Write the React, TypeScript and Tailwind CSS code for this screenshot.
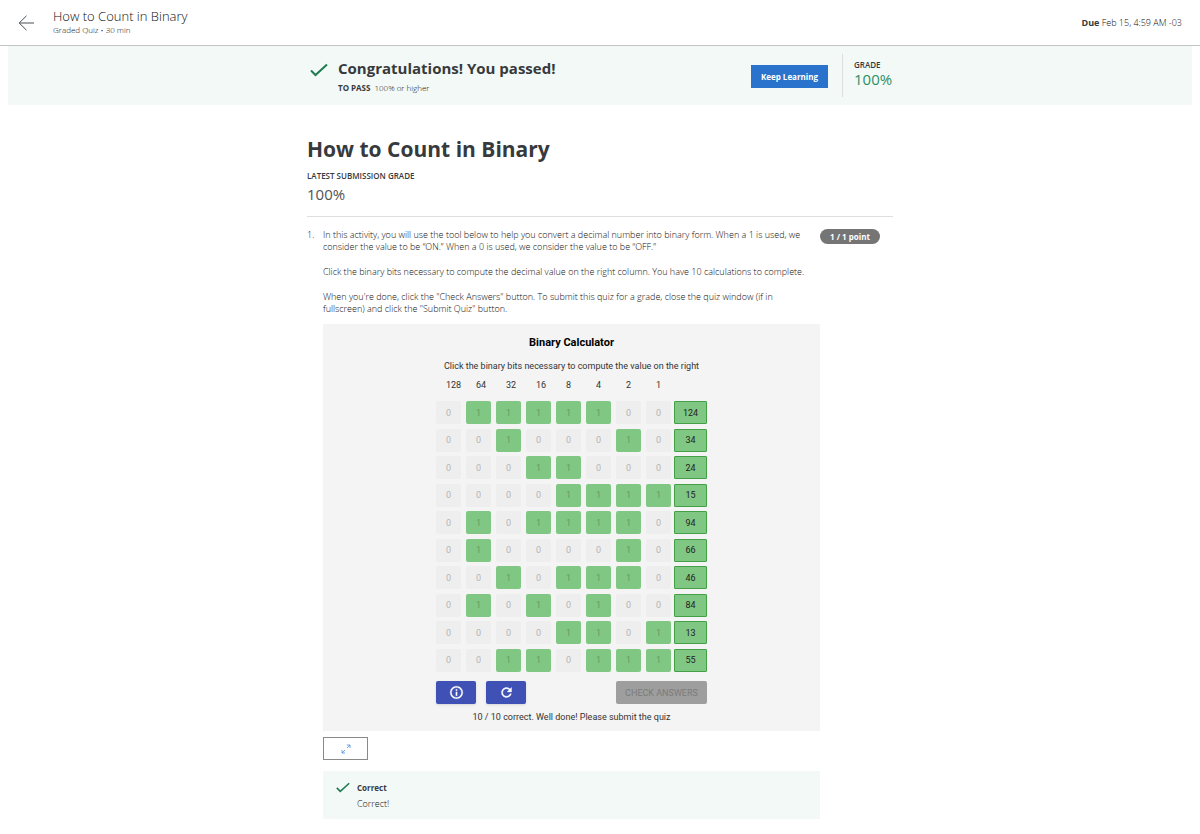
const columns = [128, 64, 32, 16, 8, 4, 2, 1];

const rows = [124, 34, 24, 15, 94, 66, 46, 84, 13, 55];

const CheckIcon = ({ className }: { className: string }) => (
  <svg className={className} viewBox="0 0 18 14" fill="none" stroke="#1d7c50" strokeWidth="2">
    <path d="M1 7.5L5.5 12L17 1.5" />
  </svg>
);

const Header = () => (
  <header className="flex h-[46px] items-center justify-between border-b border-[#c4c4c4] pl-[18px] pr-[18px]">
    <div className="flex items-center">
      <button type="button" aria-label="Back" className="mr-[19px]">
        <svg className="h-4 w-4" viewBox="0 0 16 16" fill="none" stroke="#4a4e52" strokeWidth="1">
          <path d="M8.5 0.8L1.2 8L8.5 15.2M1.2 8H16" />
        </svg>
      </button>
      <div className="pb-[2px]">
        <div className="text-[13px] font-light leading-4 text-[#111]">How to Count in Binary</div>
        <div className="text-[8px] font-light leading-3 text-[#111]">Graded Quiz • 30 min</div>
      </div>
    </div>
    <div className="text-[9px] font-light leading-3 text-[#111]">
      <span className="font-bold text-[#373a3c]">Due</span> Feb 15, 4:59 AM -03
    </div>
  </header>
);

const Banner = () => (
  <section className="mx-2 bg-[#f3f9f7]">
    <div className="mx-auto flex h-[59px] max-w-[586px] items-center">
      <CheckIcon className="mb-3 ml-[3px] mr-[10px] h-[14px] w-[18px]" />
      <div className="flex-1">
        <h2 className="text-[15px] font-bold leading-5 text-[#373a3c]">Congratulations! You passed!</h2>
        <p className="mt-1 text-[8px] font-light leading-3 text-[#111]">
          <span className="mr-1 font-bold text-[#373a3c]">TO PASS</span>100% or higher
        </p>
      </div>
      <button type="button" className="mr-[14px] mt-[2px] h-[23px] w-[77px] bg-[#2a73cc] text-[8px] font-bold text-white">
        Keep Learning
      </button>
      <div className="flex h-[43px] w-[51px] flex-col justify-center border-l border-[#dedede] pb-[6px] pl-[11px]">
        <div className="text-[8px] font-semibold leading-3 text-[#373a3c]">GRADE</div>
        <div className="text-[15px] leading-4 text-[#2f8f63]">100%</div>
      </div>
    </div>
  </section>
);

const Calculator = () => (
  <div className="mt-[9px] bg-[#f4f4f4] pb-2 pt-[13px] font-[Roboto,sans-serif] font-normal text-[#333]">
    <h3 className="text-center text-[11px] font-bold leading-3 text-black">Binary Calculator</h3>
    <p className="mt-[11px] text-center text-[9px] leading-3">
      Click the binary bits necessary to compute the value on the right
    </p>
    <div className="mx-auto w-[271px]">
      <div className="mt-[7px] flex gap-[5px] text-[9px] leading-3">
        {columns.map((value) => (
          <div key={value} className="w-[25px] pl-[10px]">{value}</div>
        ))}
      </div>
      <div className="mt-[10px] flex h-[271px] flex-col justify-between">
        {rows.map((total) => (
          <div key={total} className="flex h-[23px] items-center justify-between">
            <div className="flex gap-[5px]">
              {columns.map((value) => {
                const on = (total & value) !== 0;
                return (
                  <button
                    key={value}
                    type="button"
                    disabled
                    className={`h-[23px] w-[25px] rounded-[2px] text-[9px] ${
                      on ? 'bg-[#81c784] text-[#5c9f60]' : 'bg-[#eee] text-[#b5b5b5]'
                    }`}
                  >
                    {on ? 1 : 0}
                  </button>
                );
              })}
            </div>
            <div className="flex h-[23px] w-[33px] items-center justify-center rounded-[1px] border border-[#43a047] bg-[#81c784] text-[9px] text-[#222]">
              {total}
            </div>
          </div>
        ))}
      </div>
      <div className="mt-[9px] flex gap-[10px]">
        <button type="button" aria-label="Info" className="flex h-[23px] w-10 items-center justify-center rounded-[2px] bg-[#3f51b5] shadow">
          <svg className="h-[15px] w-[15px]" viewBox="0 0 24 24" fill="#fff">
            <path stroke="#fff" strokeWidth="0.6" d="M11 7h2v2h-2zm0 4h2v6h-2zm1-9C6.48 2 2 6.48 2 12s4.48 10 10 10 10-4.48 10-10S17.52 2 12 2zm0 18c-4.41 0-8-3.59-8-8s3.59-8 8-8 8 3.59 8 8-3.59 8-8 8z" />
          </svg>
        </button>
        <button type="button" aria-label="Reset" className="flex h-[23px] w-10 items-center justify-center rounded-[2px] bg-[#3f51b5] shadow">
          <svg className="h-[15px] w-[15px]" viewBox="0 0 24 24" fill="#fff">
            <path stroke="#fff" strokeWidth="0.6" d="M17.65 6.35C16.2 4.9 14.21 4 12 4c-4.42 0-7.99 3.58-7.99 8s3.57 8 7.99 8c3.73 0 6.84-2.55 7.73-6h-2.08c-.82 2.33-3.04 4-5.65 4-3.31 0-6-2.69-6-6s2.69-6 6-6c1.66 0 3.14.69 4.22 1.78L13 11h7V4l-2.35 2.35z" />
          </svg>
        </button>
        <button type="button" disabled className="ml-auto h-[23px] w-[91px] rounded-[2px] bg-[#9e9e9e] text-[9px] text-[#7b7b7b]">
          CHECK ANSWERS
        </button>
      </div>
    </div>
    <p className="mt-[7px] text-center text-[9px] leading-3">10 / 10 correct. Well done! Please submit the quiz</p>
  </div>
);

export default function App() {
  return (
    <div className="min-h-screen bg-white pb-4 font-['Open_Sans',sans-serif]">
      <Header />
      <Banner />
      <main className="mx-auto max-w-[586px] pt-7">
        <h1 className="text-[21px] font-bold leading-8 text-[#373a3c]">How to Count in Binary</h1>
        <div className="mt-[5px] text-[8px] font-semibold leading-3 text-[#373a3c]">LATEST SUBMISSION GRADE</div>
        <div className="mt-1 text-[15px] leading-4 text-[#525252]">100%</div>
        <hr className="mt-[14px] border-[#dedede]" />
        <div className="mt-3 flex items-start text-[9px] font-light leading-3 text-[#111]">
          <div className="w-4 shrink-0">1.</div>
          <div className="min-w-0 flex-1">
            <div className="space-y-[13px] pr-[10px]">
              <p>
                In this activity, you will use the tool below to help you convert a decimal number into binary form. When a
                1 is used, we consider the value to be “ON.” When a 0 is used, we consider the value to be “OFF.”
              </p>
              <p>
                Click the binary bits necessary to compute the decimal value on the right column. You have 10 calculations
                to complete.
              </p>
              <p>
                When you're done, click the "Check Answers" button. To submit this quiz for a grade, close the quiz window
                (if in fullscreen) and click the "Submit Quiz" button.
              </p>
            </div>
            <Calculator />
            <button type="button" aria-label="Open fullscreen" className="mt-[6px] flex h-[23px] w-[45px] items-center justify-center border border-[#8a8a8a]">
              <svg className="h-[10px] w-[10px]" viewBox="0 0 10 10" fill="none" stroke="#4a8fe0" strokeWidth="0.8">
                <path d="M6 1H9V4M9 1L6 4M4 9H1V6M1 9L4 6" />
              </svg>
            </button>
            <div className="mt-[11px] flex h-12 bg-[#f3f9f7] pl-[13px] pt-[11px]">
              <CheckIcon className="mr-[7px] h-[11px] w-[14px]" />
              <div>
                <div className="text-[8px] font-bold leading-3 text-[#373a3c]">Correct</div>
                <div className="mt-1">Correct!</div>
              </div>
            </div>
          </div>
          <div className="mr-[13px] h-[15px] w-[60px] shrink-0 rounded-full bg-[#757575] text-center text-[8px] font-bold leading-[15px] text-white">
            1 / 1 point
          </div>
        </div>
      </main>
    </div>
  );
}
